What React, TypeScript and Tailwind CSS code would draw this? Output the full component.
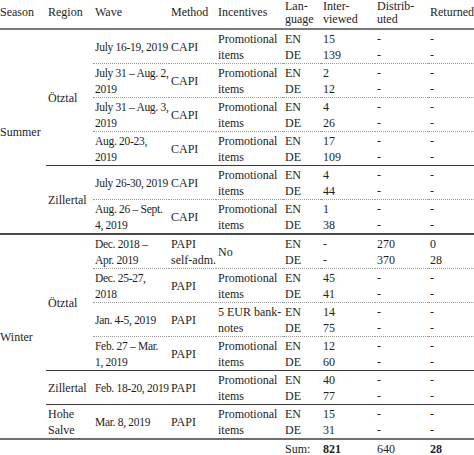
import React from 'react';

type Edge = 'dot' | 'region' | 'season' | 'end';

interface Wave {
  season?: string;
  seasonSpan?: number;
  region?: string[];
  regionSpan?: number;
  wave: string[];
  method: string[];
  incentives: string[];
  interviewed: [string, string];
  distributed: [string, string];
  returned: [string, string];
  edge: Edge;
  regionEdge?: Edge;
}

const promo = ['Promotional', 'items'];
const none: [string, string] = ['-', '-'];

const waves: Wave[] = [
  { season: 'Summer', seasonSpan: 6, region: ['Ötztal'], regionSpan: 4, regionEdge: 'region', wave: ['July 16-19, 2019'], method: ['CAPI'], incentives: promo, interviewed: ['15', '139'], distributed: none, returned: none, edge: 'dot' },
  { wave: ['July 31 – Aug. 2,', '2019'], method: ['CAPI'], incentives: promo, interviewed: ['2', '12'], distributed: none, returned: none, edge: 'dot' },
  { wave: ['July 31 – Aug. 3,', '2019'], method: ['CAPI'], incentives: promo, interviewed: ['4', '26'], distributed: none, returned: none, edge: 'dot' },
  { wave: ['Aug. 20-23,', '2019'], method: ['CAPI'], incentives: promo, interviewed: ['17', '109'], distributed: none, returned: none, edge: 'region' },
  { region: ['Zillertal'], regionSpan: 2, regionEdge: 'season', wave: ['July 26-30, 2019'], method: ['CAPI'], incentives: promo, interviewed: ['4', '44'], distributed: none, returned: none, edge: 'dot' },
  { wave: ['Aug. 26 – Sept.', '4, 2019'], method: ['CAPI'], incentives: promo, interviewed: ['1', '38'], distributed: none, returned: none, edge: 'season' },
  { season: 'Winter', seasonSpan: 6, region: ['Ötztal'], regionSpan: 4, regionEdge: 'region', wave: ['Dec. 2018 –', 'Apr. 2019'], method: ['PAPI', 'self-adm.'], incentives: ['No'], interviewed: none, distributed: ['270', '370'], returned: ['0', '28'], edge: 'dot' },
  { wave: ['Dec. 25-27,', '2018'], method: ['PAPI'], incentives: promo, interviewed: ['45', '41'], distributed: none, returned: none, edge: 'dot' },
  { wave: ['Jan. 4-5, 2019'], method: ['PAPI'], incentives: ['5 EUR bank-', 'notes'], interviewed: ['14', '75'], distributed: none, returned: none, edge: 'dot' },
  { wave: ['Feb. 27 – Mar.', '1, 2019'], method: ['PAPI'], incentives: promo, interviewed: ['12', '60'], distributed: none, returned: none, edge: 'region' },
  { region: ['Zillertal'], regionSpan: 1, regionEdge: 'region', wave: ['Feb. 18-20, 2019'], method: ['PAPI'], incentives: promo, interviewed: ['40', '77'], distributed: none, returned: none, edge: 'region' },
  { region: ['Hohe', 'Salve'], regionSpan: 1, regionEdge: 'end', wave: ['Mar. 8, 2019'], method: ['PAPI'], incentives: promo, interviewed: ['15', '31'], distributed: none, returned: none, edge: 'end' },
];

const edgeClass: Record<Edge, string> = {
  dot: 'border-b border-dotted border-[#9a9a9a]',
  region: 'border-b border-solid border-[#3a3a3a]',
  season: 'border-b-2 border-solid border-[#4a4a4a]',
  end: 'border-b-2 border-solid border-[#6e6e6e]',
};

const Lines: React.FC<{ lines: string[] }> = ({ lines }) => (
  <>
    {lines.map((l, i) => (
      <div key={i} className="whitespace-nowrap">{l}</div>
    ))}
  </>
);

const cell = 'align-middle pl-[2px] pt-[1px] leading-[16px] text-left font-normal';

const App: React.FC = () => {
  return (
    <div className="w-[474px] bg-white text-[#1e1e1e] text-[12px]" style={{ fontFamily: '"Liberation Serif", "DejaVu Serif", serif' }}>
      <table className="w-[474px] table-fixed border-separate border-spacing-0">
        <colgroup>
          <col className="w-[46px]" />
          <col className="w-[47px]" />
          <col className="w-[76px]" />
          <col className="w-[47px]" />
          <col className="w-[67px]" />
          <col className="w-[38px]" />
          <col className="w-[54px]" />
          <col className="w-[53px]" />
          <col className="w-[46px]" />
        </colgroup>
        <thead>
          <tr className="leading-[12.5px]">
            {[['Season'], ['Region'], ['Wave'], ['Method'], ['Incentives'], ['Lan-', 'guage'], ['Inter-', 'viewed'], ['Distrib-', 'uted'], ['Returned']].map((h, i) => (
              <th
                key={i}
                className={`align-middle text-left font-normal h-[28px] pb-[3px] border-b-2 border-[#7a7a7a] ${i === 0 ? 'pl-0' : 'pl-[2px]'}`}
              >
                <Lines lines={h} />
              </th>
            ))}
          </tr>
        </thead>
        <tbody>
          {waves.map((w, idx) => {
            const e = edgeClass[w.edge];
            return (
              <tr key={idx}>
                {w.season && (
                  <td rowSpan={w.seasonSpan} className={`align-middle pl-0 leading-[16px] ${edgeClass[w.season === 'Summer' ? 'season' : 'end']}`}>
                    {w.season}
                  </td>
                )}
                {w.region && (
                  <td rowSpan={w.regionSpan} className={`${cell} ${edgeClass[w.regionEdge ?? 'region']}`}>
                    <Lines lines={w.region} />
                  </td>
                )}
                <td className={`${cell} ${e} text-[11.5px] tracking-[-0.3px]`}>
                  <Lines lines={w.wave} />
                </td>
                <td className={`${cell} ${e}`}>
                  <Lines lines={w.method} />
                </td>
                <td className={`${cell} ${e}`}>
                  <Lines lines={w.incentives} />
                </td>
                <td className={`${cell} ${e}`}>
                  <Lines lines={['EN', 'DE']} />
                </td>
                <td className={`${cell} ${e}`}>
                  <Lines lines={w.interviewed} />
                </td>
                <td className={`${cell} ${e}`}>
                  <Lines lines={w.distributed} />
                </td>
                <td className={`${cell} ${e}`}>
                  <Lines lines={w.returned} />
                </td>
              </tr>
            );
          })}
          <tr className="leading-[14px]">
            <td colSpan={5} className="pt-[2px]"></td>
            <td className="pl-[2px] pt-[2px]">Sum:</td>
            <td className="pl-[2px] pt-[2px] font-bold">821</td>
            <td className="pl-[2px] pt-[2px]">640</td>
            <td className="pl-[2px] pt-[2px] font-bold">28</td>
          </tr>
        </tbody>
      </table>
    </div>
  );
};

export default App;
